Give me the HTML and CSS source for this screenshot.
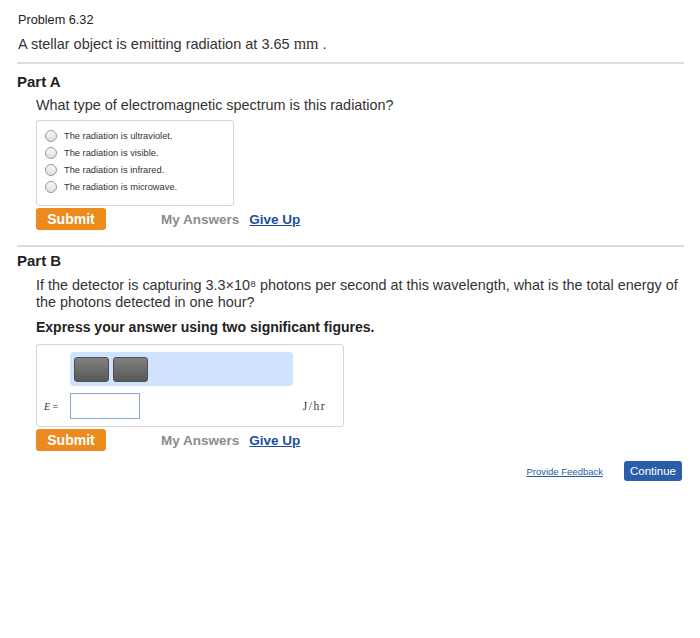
FILE: index.html
```html
<!DOCTYPE html>
<html>
<head>
<meta charset="utf-8">
<link rel="stylesheet" href="styles.css">
</head>
<body>
<div class="page">
  <div class="title">Problem 6.32</div>
  <div class="intro">A stellar object is emitting radiation at 3.65 <span class="math">mm</span> .</div>

  <section class="part">
    <h2 class="part-title">Part A</h2>
    <div class="part-body">
      <p class="question">What type of electromagnetic spectrum is this radiation?</p>
      <div class="options">
        <label class="option"><span class="radio"></span>The radiation is ultraviolet.</label>
        <label class="option"><span class="radio"></span>The radiation is visible.</label>
        <label class="option"><span class="radio"></span>The radiation is infrared.</label>
        <label class="option"><span class="radio"></span>The radiation is microwave.</label>
      </div>
      <div class="actions">
        <button class="submit">Submit</button>
        <span class="my-answers">My Answers</span>
        <a class="give-up">Give Up</a>
      </div>
    </div>
  </section>

  <section class="part part-b">
    <h2 class="part-title">Part B</h2>
    <div class="part-body">
      <p class="question q-b">If the detector is capturing 3.3×10⁸ photons per second at this wavelength, what is the total energy of the photons detected in one hour?</p>
      <p class="express">Express your answer using two significant figures.</p>
      <div class="answer-box">
        <div class="toolbar">
          <span class="key"></span><span class="key"></span>
        </div>
        <div class="answer-row">
          <span class="var"><i>E</i> =</span>
          <span class="input"></span>
          <span class="unit">J/hr</span>
        </div>
      </div>
      <div class="actions actions-b">
        <button class="submit">Submit</button>
        <span class="my-answers">My Answers</span>
        <a class="give-up">Give Up</a>
      </div>
    </div>
  </section>

  <div class="footer">
    <a class="feedback">Provide Feedback</a>
    <button class="continue">Continue</button>
  </div>
</div>
</body>
</html>
```

FILE: styles.css
```css
* { box-sizing: border-box; }
body {
  margin: 0;
  background: #fff;
  font-family: "Liberation Sans", Arial, sans-serif;
  color: #333;
}
.page {
  padding: 12px 16px 0 18px;
}
.title {
  font-size: 12.7px;
  line-height: 17px;
  color: #222;
}
.intro {
  font-size: 14.5px;
  line-height: 20px;
  margin-top: 5px;
  color: #333;
}
.math {
  font-family: "Liberation Serif", "Times New Roman", serif;
  font-size: 16px;
}
.part {
  border-top: 2px solid #ddd;
  margin-top: 8px;
  margin-left: -1px;
}
.part-title {
  font-size: 15px;
  font-weight: bold;
  margin: 0;
  padding-top: 9px;
  line-height: 18px;
  color: #222;
}
.part-body {
  padding-left: 19px;
}
.question {
  margin: 6px 0 0;
  font-size: 14.4px;
  line-height: 17px;
  color: #333;
}
.options {
  margin-top: 6px;
  width: 198px;
  height: 86px;
  border: 1px solid #d6d6d6;
  border-radius: 3px;
  padding: 8px 0 0 8px;
  display: flex;
  flex-direction: column;
  gap: 3px;
}
.option {
  display: flex;
  align-items: center;
  font-size: 9.3px;
  line-height: 14px;
  color: #333;
}
.radio {
  width: 12px;
  height: 12px;
  border-radius: 50%;
  border: 1px solid #999;
  background: linear-gradient(#fafafa, #ddd);
  margin-right: 7px;
}
.actions {
  display: flex;
  align-items: center;
  margin-top: 2px;
  height: 22px;
}
.submit {
  width: 70px;
  height: 22px;
  background: #ec8a1e;
  border: none;
  border-radius: 3px;
  color: #fff;
  font-family: "Liberation Sans", Arial, sans-serif;
  font-weight: bold;
  font-size: 14px;
  padding: 0;
}
.my-answers {
  margin-left: 55px;
  font-weight: bold;
  font-size: 13.5px;
  color: #8c8c8c;
}
.give-up {
  margin-left: 10px;
  font-weight: bold;
  font-size: 13.5px;
  color: #1c4fa0;
  text-decoration: underline;
}
.part-b {
  margin-top: 15px;
}
.part-b .part-title {
  padding-top: 5px;
}
.q-b {
  margin-top: 7px;
  line-height: 17px;
  padding-right: 2px;
}
.express {
  margin: 8px 0 0;
  font-size: 14px;
  font-weight: bold;
  line-height: 17px;
  color: #222;
}
.answer-box {
  margin-top: 8px;
  width: 308px;
  height: 83px;
  border: 1px solid #d6d6d6;
  border-radius: 3px;
  padding: 7px 0 0 33px;
}
.toolbar {
  width: 223px;
  height: 34px;
  background: #cfe3ff;
  border-radius: 4px;
  display: flex;
  align-items: center;
  gap: 4px;
  padding-left: 4px;
}
.key {
  width: 35px;
  height: 25px;
  border-radius: 3px;
  background: linear-gradient(#808080, #585858);
  border: 1px solid #505050;
}
.answer-row {
  display: flex;
  align-items: center;
  margin-top: 7px;
  margin-left: -26px;
  height: 26px;
}
.var {
  font-family: "Liberation Serif", "Times New Roman", serif;
  font-size: 10px;
  width: 26px;
  color: #333;
}
.input {
  width: 70px;
  height: 26px;
  border: 1px solid #8aa7d6;
}
.unit {
  margin-left: auto;
  margin-right: 17px;
  font-family: "Liberation Serif", "Times New Roman", serif;
  font-size: 11.5px;
  letter-spacing: 1.5px;
  color: #333;
}
.actions-b {
  margin-top: 2px;
}
.footer {
  display: flex;
  justify-content: flex-end;
  align-items: center;
  margin-top: 10px;
  padding-right: 2px;
}
.feedback {
  font-size: 9.5px;
  color: #2a5aa6;
  text-decoration: underline;
  margin-right: 21px;
}
.continue {
  width: 58px;
  height: 20px;
  background: #2a5ea8;
  color: #fff;
  border: none;
  border-radius: 3px;
  font-family: "Liberation Sans", Arial, sans-serif;
  font-size: 11.5px;
  padding: 0;
}
```
